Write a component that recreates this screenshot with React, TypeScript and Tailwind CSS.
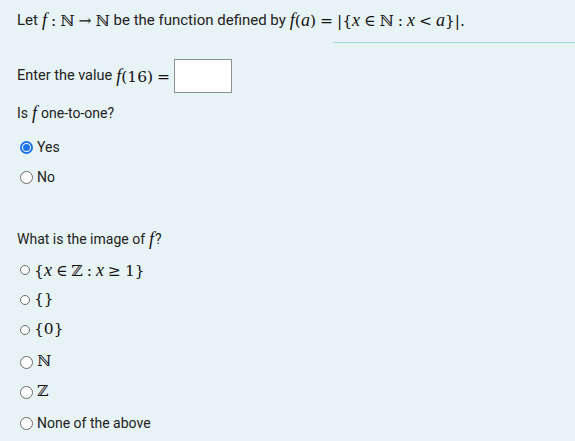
import React from "react";

const sans = { fontFamily: "Roboto, 'Liberation Sans', sans-serif" };

function V({ children }: { children: React.ReactNode }) {
  return <i className="font-['Liberation_Serif',serif] italic text-[18px]">{children}</i>;
}

function R({ children }: { children: React.ReactNode }) {
  return <span className="mx-[4px]">{children}</span>;
}

function M({ children }: { children: React.ReactNode }) {
  return (
    <span className="font-['DejaVu_Serif',serif] text-[15.5px] text-[#111] whitespace-nowrap">
      {children}
    </span>
  );
}

function Radio({ checked, small }: { checked?: boolean; small?: boolean }) {
  const size = small ? "w-[10px] h-[10px]" : "w-[13px] h-[13px]";
  if (checked) {
    return (
      <span className={`${size} shrink-0 rounded-full border-2 border-[#1a73e8] bg-white flex items-center justify-center`}>
        <span className="w-[7px] h-[7px] rounded-full bg-[#1a73e8]" />
      </span>
    );
  }
  return <span className={`${size} shrink-0 rounded-full border border-[#6b6b6b] bg-white`} />;
}

const options: { label: React.ReactNode; small?: boolean; mt: string }[] = [
  {
    label: (
      <M>
        {"{"}
        <V>x</V>
        <R>∈</R>ℤ<R>:</R>
        <V>x</V>
        <R>≥</R>1{"}"}
      </M>
    ),
    small: true,
    mt: "mt-[7px]",
  },
  { label: <M>{"{}"}</M>, small: true, mt: "mt-[6px]" },
  { label: <M>{"{0}"}</M>, small: true, mt: "mt-[6px]" },
  { label: <M>ℕ</M>, mt: "mt-[8px]" },
  { label: <M>ℤ</M>, mt: "mt-[6px]" },
  { label: <span className="text-[14px]">None of the above</span>, mt: "mt-[7px]" },
];

export default function App() {
  return (
    <div className="min-h-[441px] w-[575px] bg-[#e8f3f5] text-[#222] text-[14px] pt-[8px]" style={sans}>
      <div className="h-6 flex items-center pl-[17px] gap-[4px] text-[15px]">
        <span>Let</span>
        <M>
          <V>f</V>
          <R>:</R>ℕ<R>→</R>ℕ
        </M>
        <span>be the function defined by</span>
        <M>
          <V>f</V>(<V>a</V>)<R>=</R>|{"{"}
          <V>x</V>
          <R>∈</R>ℕ<R>:</R>
          <V>x</V>
          <R>&lt;</R>
          <V>a</V>
          {"}"}|.
        </M>
      </div>

      <div className="mt-[10px] ml-[333px] h-px bg-[#a9d9e2]" />

      <div className="mt-[16px] pl-[17px] flex items-center h-[34px] gap-[4px] text-[14.5px]">
        <span>Enter the value</span>
        <M>
          <V>f</V>(16)<span className="ml-[4px]">=</span>
        </M>
        <span className="w-[58px] h-[34px] bg-white border border-[#8a9196]" />
      </div>

      <div className="mt-[8px] pl-[17px] h-6 flex items-center gap-[4px]">
        <span>Is</span>
        <M>
          <V>f</V>
        </M>
        <span>one-to-one?</span>
      </div>

      <div className="mt-[10px] pl-[20px] h-6 flex items-center gap-[4px]">
        <Radio checked />
        <span>Yes</span>
      </div>
      <div className="mt-[6px] pl-[20px] h-6 flex items-center gap-[4px]">
        <Radio />
        <span>No</span>
      </div>

      <div className="mt-[38px] pl-[17px] h-6 flex items-center gap-[4px]">
        <span>What is the image of</span>
        <M>
          <V>f</V>
        </M>
        <span className="-ml-[3px]">?</span>
      </div>

      {options.map((o, i) => (
        <div key={i} className={`${o.mt} pl-[20px] h-6 flex items-center gap-[4px]`}>
          <Radio small={o.small} />
          {o.label}
        </div>
      ))}
    </div>
  );
}
